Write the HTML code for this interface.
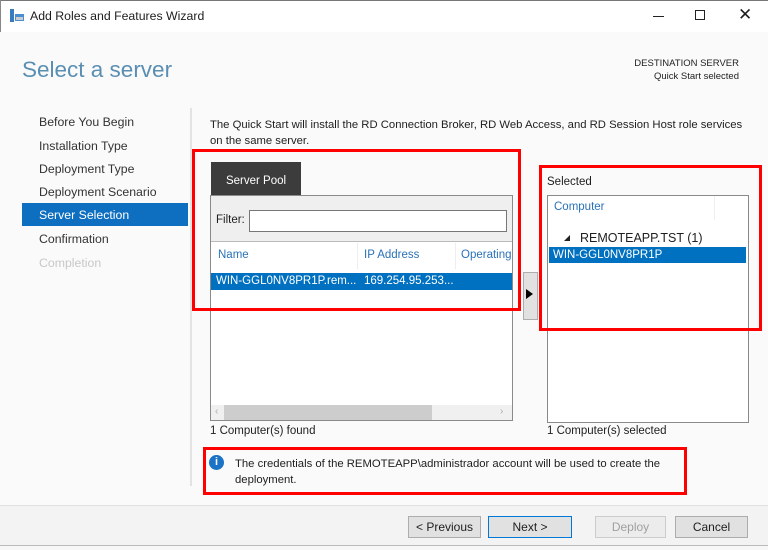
<!DOCTYPE html>
<html><head><style>
*{margin:0;padding:0;box-sizing:border-box}
body{width:768px;height:550px;overflow:hidden;background:#fff;font-family:"Liberation Sans",sans-serif;font-size:12px;color:#1e1e1e;position:relative}
.a{position:absolute;white-space:nowrap}
.nav{left:39px;font-size:12.3px;color:#333}
.btn{position:absolute;top:516px;height:22px;border:1px solid #adadad;background:#e1e1e1;text-align:center;line-height:20px;font-size:12px}
.red{position:absolute;border:3px solid #f00}
</style></head><body>
<div class="a" style="left:0;top:0;width:768px;height:1px;background:#777"></div>
<div class="a" style="left:0;top:0;width:1px;height:550px;background:#888"></div>
<div class="a" style="left:0;top:32px;width:768px;height:473px;background:#fafafa"></div>
<svg class="a" style="left:10px;top:9px" width="14" height="13"><rect x="0" y="0" width="4" height="13" fill="#3a7bbf"/><rect x="5" y="5" width="9" height="7" fill="#4a8fd0"/><rect x="6" y="8" width="7" height="3" fill="#ccc"/></svg>
<div class="a" style="left:30px;top:9px;font-size:12.3px">Add Roles and Features Wizard</div>
<div class="a" style="left:653px;top:16px;width:11px;height:1px;background:#222"></div>
<div class="a" style="left:695px;top:10px;width:10px;height:10px;border:1px solid #222"></div>
<div class="a" style="left:738px;top:5px;font-size:17px">✕</div>
<div class="a" style="left:22px;top:57px;font-size:22.5px;color:#5a8fb3">Select a server</div>
<div class="a" style="left:600px;top:57px;width:139px;text-align:right;font-size:9.5px;line-height:13px;color:#222">DESTINATION SERVER<br>Quick Start selected</div>
<div class="a nav" style="top:115px">Before You Begin</div>
<div class="a nav" style="top:139px">Installation Type</div>
<div class="a nav" style="top:162px">Deployment Type</div>
<div class="a nav" style="top:185px">Deployment Scenario</div>
<div class="a" style="left:22px;top:203px;width:166px;height:23px;background:#0e6fc0"></div>
<div class="a nav" style="top:208px;color:#fff">Server Selection</div>
<div class="a nav" style="top:232px">Confirmation</div>
<div class="a nav" style="top:256px;color:#c8c8c8">Completion</div>
<div class="a" style="left:190px;top:108px;width:2px;height:378px;background:#e3e3e3"></div>
<div class="a" style="left:210px;top:117px;font-size:11.3px;line-height:16px">The Quick Start will install the RD Connection Broker, RD Web Access, and RD Session Host role services<br>on the same server.</div>
<div class="a" style="left:211px;top:162px;width:90px;height:33px;background:#3c3c3c;color:#fff;text-align:center;line-height:38px;font-size:11.5px">Server Pool</div>
<div class="a" style="left:210px;top:195px;width:303px;height:226px;border:1px solid #8a8a8a;background:#fff"></div>
<div class="a" style="left:211px;top:196px;width:301px;height:46px;background:#efefef;border-bottom:1px solid #bbb"></div>
<div class="a" style="left:216px;top:214px;font-size:11.5px">Filter:</div>
<div class="a" style="left:249px;top:210px;width:258px;height:22px;border:1px solid #777;background:#fff"></div>
<div class="a" style="left:218px;top:249px;color:#2a72b8;font-size:11.5px">Name</div>
<div class="a" style="left:357px;top:243px;width:1px;height:26px;background:#eee"></div>
<div class="a" style="left:364px;top:249px;color:#2a72b8;font-size:11.5px">IP Address</div>
<div class="a" style="left:455px;top:243px;width:1px;height:26px;background:#eee"></div>
<div class="a" style="left:461px;top:249px;color:#2a72b8;font-size:11.5px">Operating</div>
<div class="a" style="left:211px;top:273px;width:301px;height:17px;background:#0070c0"></div>
<div class="a" style="left:216px;top:275px;color:#fff;font-size:11.5px">WIN-GGL0NV8PR1P.rem...</div>
<div class="a" style="left:364px;top:275px;color:#fff;font-size:11.5px">169.254.95.253...</div>
<div class="a" style="left:211px;top:405px;width:301px;height:15px;background:#f0f0f0"></div>
<div class="a" style="left:224px;top:405px;width:208px;height:15px;background:#cdcdcd"></div>
<div class="a" style="left:215px;top:406px;color:#aaa;font-size:10px">‹</div>
<div class="a" style="left:500px;top:406px;color:#aaa;font-size:10px">›</div>
<div class="a" style="left:523px;top:272px;width:15px;height:48px;background:#e1e1e1;border:1px solid #adadad"></div>
<div class="a" style="left:526px;top:289px;width:0;height:0;border-left:7px solid #000;border-top:5px solid transparent;border-bottom:5px solid transparent"></div>
<div class="a" style="left:210px;top:425px;font-size:11.5px">1 Computer(s) found</div>
<div class="a" style="left:547px;top:176px;font-size:11.5px">Selected</div>
<div class="a" style="left:547px;top:195px;width:202px;height:228px;border:1px solid #8a8a8a;background:#fff"></div>
<div class="a" style="left:714px;top:196px;width:1px;height:24px;background:#eee"></div>
<div class="a" style="left:554px;top:201px;color:#2a72b8;font-size:11.5px">Computer</div>
<div class="a" style="left:564px;top:235px;width:0;height:0;border-right:6px solid #222;border-top:6px solid transparent"></div>
<div class="a" style="left:580px;top:231px;font-size:12.5px">REMOTEAPP.TST (1)</div>
<div class="a" style="left:549px;top:247px;width:197px;height:16px;background:#0070c0"></div>
<div class="a" style="left:553px;top:248px;color:#fff;font-size:11.5px;line-height:15px">WIN-GGL0NV8PR1P</div>
<div class="a" style="left:547px;top:425px;font-size:11.5px">1 Computer(s) selected</div>
<div class="red" style="left:192px;top:149px;width:329px;height:162px"></div>
<div class="red" style="left:539px;top:165px;width:223px;height:166px"></div>
<div class="red" style="left:203px;top:447px;width:484px;height:48px"></div>
<div class="a" style="left:209px;top:455px;width:15px;height:15px;border-radius:50%;background:#1a73c5;color:#fff;font-weight:bold;font-size:11px;text-align:center;line-height:15px">i</div>
<div class="a" style="left:235px;top:456px;font-size:11.3px;line-height:16px">The credentials of the REMOTEAPP\administrador account will be used to create the<br>deployment.</div>
<div class="a" style="left:0;top:505px;width:768px;height:1px;background:#e0e0e0"></div>
<div class="a" style="left:0;top:506px;width:768px;height:39px;background:#f3f3f3"></div>
<div class="btn" style="left:408px;width:73px">&lt; Previous</div>
<div class="btn" style="left:488px;width:84px;border-color:#0078d7">Next &gt;</div>
<div class="btn" style="left:595px;width:71px;color:#a0a0a0;background:#ececec;border-color:#ccc">Deploy</div>
<div class="btn" style="left:675px;width:73px">Cancel</div>
<div class="a" style="left:0;top:545px;width:768px;height:1px;background:#bbb"></div>
<div class="a" style="left:0;top:546px;width:768px;height:4px;background:#f7f7f7"></div>
</body></html>
